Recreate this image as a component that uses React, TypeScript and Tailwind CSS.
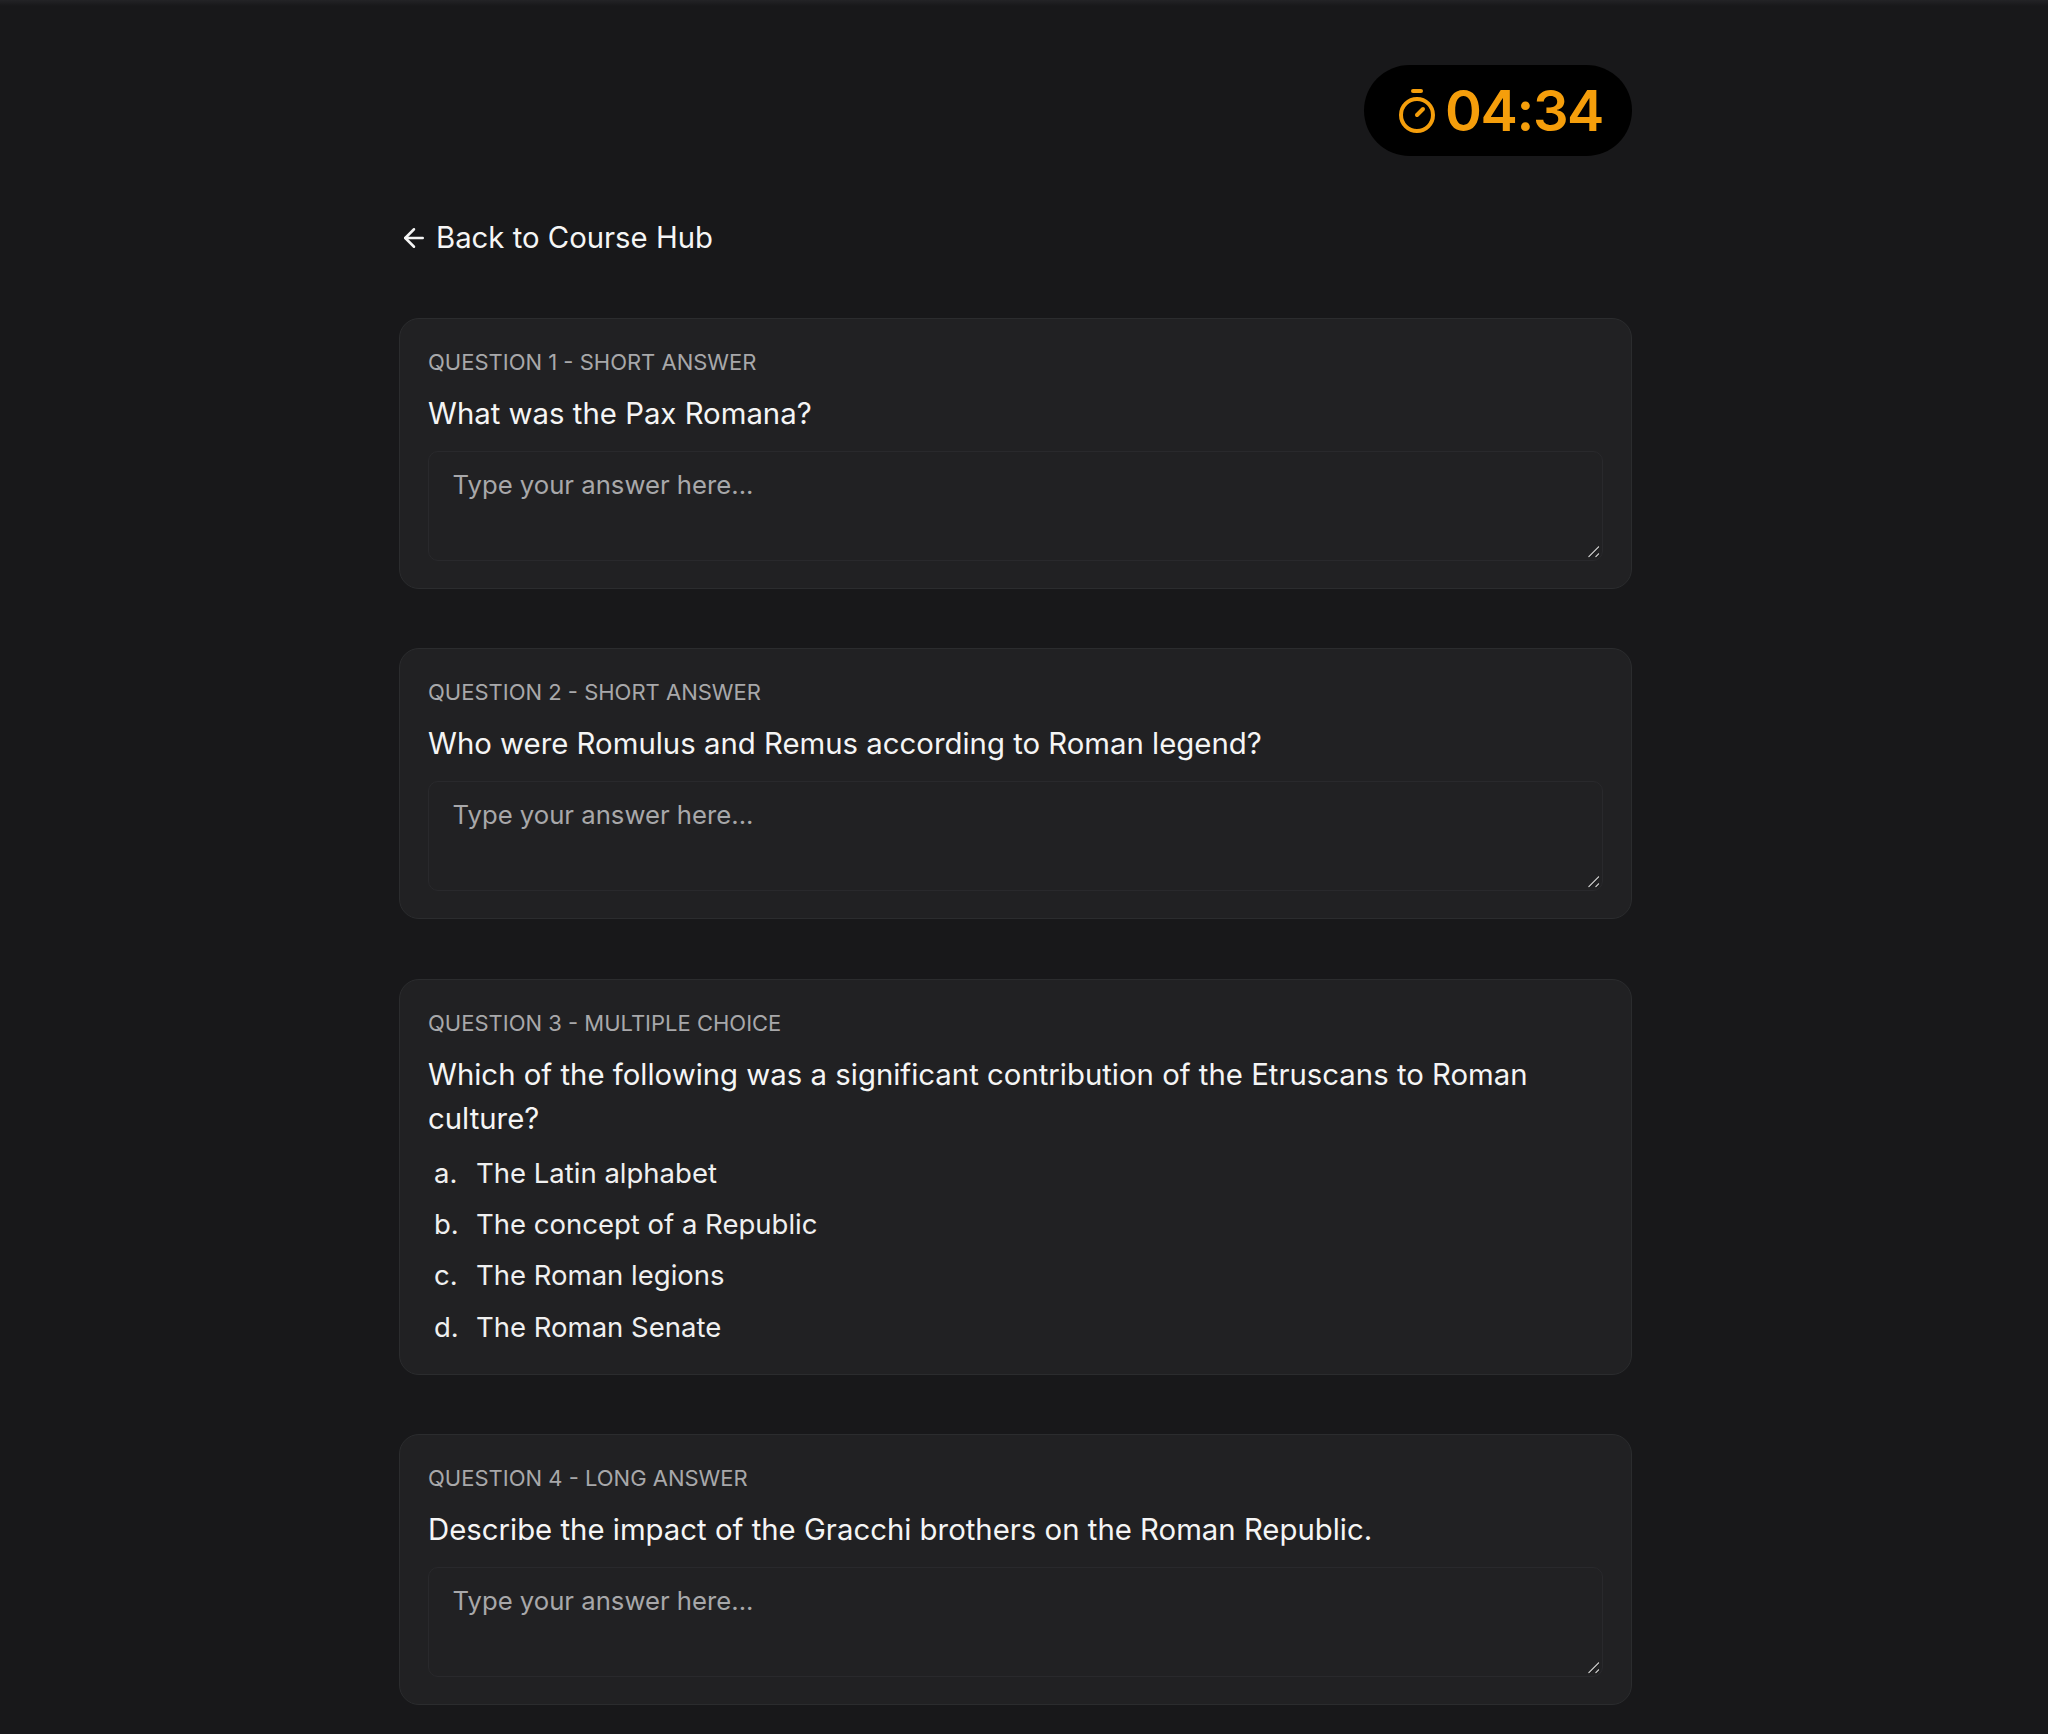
import { ArrowLeft, Timer } from "lucide-react";

interface Question {
  label: string;
  text: string;
  options?: string[];
}

const questions: Question[] = [
  { label: "QUESTION 1 - SHORT ANSWER", text: "What was the Pax Romana?" },
  { label: "QUESTION 2 - SHORT ANSWER", text: "Who were Romulus and Remus according to Roman legend?" },
  {
    label: "QUESTION 3 - MULTIPLE CHOICE",
    text: "Which of the following was a significant contribution of the Etruscans to Roman culture?",
    options: ["The Latin alphabet", "The concept of a Republic", "The Roman legions", "The Roman Senate"],
  },
  { label: "QUESTION 4 - LONG ANSWER", text: "Describe the impact of the Gracchi brothers on the Roman Republic." },
];

const letters = ["a.", "b.", "c.", "d."];

function QuestionCard({ q }: { q: Question }) {
  return (
    <div className={`rounded-[20px] border border-[#2b2c2e] bg-[#212123] px-[28px] pt-[27px] ${q.options ? "pb-[25px]" : "pb-[27px]"}`}>
      <div className="text-[22px] leading-[33px] text-[#a8a8aa]">{q.label}</div>
      <div className="mt-[13px] text-[29.35px] leading-[44px] text-[#f5f5f5]">{q.text}</div>
      {q.options ? (
        <ol className="mt-[10px] flex flex-col gap-[7.3px] pl-[6px] text-[27.5px] leading-[44px] text-[#f0f0f0]">
          {q.options.map((o, i) => (
            <li key={o} className="flex">
              <span className="w-[42px]">{letters[i]}</span>
              <span>{o}</span>
            </li>
          ))}
        </ol>
      ) : (
        <div className="relative mt-[15px]">
          <textarea
            rows={2}
            placeholder="Type your answer here..."
            className="block h-[110px] w-full resize-none rounded-[10px] border border-[#29292c] bg-[#212123] px-[23.5px] py-[15px] text-[25.7px] leading-[36px] outline-none placeholder:text-[#a8a8aa]"
          />
          {/* resize grip */}
          <svg className="pointer-events-none absolute right-[3px] bottom-[3px] h-[12px] w-[12px]" viewBox="0 0 12 12">
            <path d="M0.5 11.5L11.5 0.5M7.5 11.5L11.5 7.5" stroke="#111" strokeWidth="2.2" />
            <path d="M0.5 11L11 0.5M7.5 11L11 7.5" stroke="#c8c8c8" strokeWidth="1.2" />
          </svg>
        </div>
      )}
    </div>
  );
}

export default function App() {
  return (
    <div className="min-h-[1734px] overflow-hidden bg-[#18181a] pr-[17px] font-['Inter',sans-serif] text-white">
      <div className="-mr-[17px] h-[6px] bg-gradient-to-b from-[#232326] to-[#18181a]" />
      <div className="mx-auto w-[1233px] pt-[59px]">
        <div className="flex justify-end">
          <div className="flex h-[91px] w-[268px] items-center justify-center gap-[4px] rounded-full bg-black">
            <Timer className="h-[48px] w-[48px] text-[#f59e0b]" strokeWidth={2} />
            <span className="text-[56px] font-semibold leading-none tracking-[-1.4px] text-[#f59e0b]">04:34</span>
          </div>
        </div>
        <div className="mt-[60px] flex items-center gap-[7px] text-[29.3px] leading-[44px] text-[#f5f5f5]">
          <ArrowLeft className="h-[30px] w-[30px]" strokeWidth={2} />
          <span>Back to Course Hub</span>
        </div>
        <div className="mt-[58px] flex flex-col gap-[59.4px]">
          {questions.map((q) => (
            <QuestionCard key={q.label} q={q} />
          ))}
        </div>
      </div>
    </div>
  );
}
